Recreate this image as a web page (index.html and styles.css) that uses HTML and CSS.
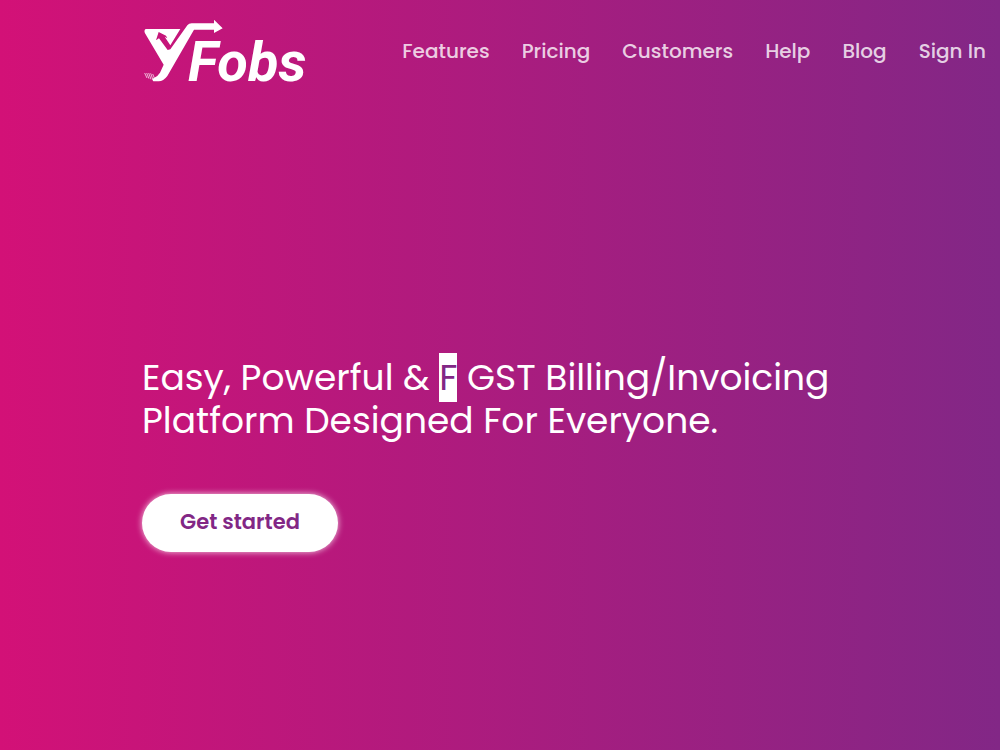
FILE: index.html
```html
<!DOCTYPE html>
<html lang="en">
<head>
<meta charset="utf-8">
<meta name="viewport" content="width=device-width, initial-scale=1">
<title>YFobs</title>
<link rel="stylesheet" href="styles.css">
</head>
<body>
<header class="header">
  <a class="logo" href="#" aria-label="YFobs home">
    <svg class="logo-image" viewBox="0 0 172 84" aria-hidden="true">
      <g transform="translate(-4 -4) scale(.33333)">
        <path class="logo-mark" d="M23 45H127L97 94L80 68L88 73L84 65L62 54L54 79L63 73L89 108L97 106L148 34Q153 28 161 28H228V17L254 43L228 57V47H168L88 186Q76 202 62 202H46Q40 195 49 191Q59 187 66 176L77 152L21 58Q17 49 23 45Z"/>
        <path class="logo-lines" d="M20 177L27 192M26 177L33 194M32 177L39 196M38 178L45 198M44 180L49 192"/>
      </g>
      <text class="logo-text" x="46" y="63">Fobs</text>
    </svg>
  </a>
  <nav class="nav" aria-label="Main">
    <a href="#">Features</a>
    <a href="#">Pricing</a>
    <a href="#">Customers</a>
    <a href="#">Help</a>
    <a href="#">Blog</a>
    <a href="#">Sign In</a>
  </nav>
</header>
<main class="hero">
  <h1 class="headline">Easy, Powerful &amp; <span class="typed">F</span> GST Billing/Invoicing Platform Designed For Everyone.</h1>
  <button class="cta" type="button">Get started</button>
</main>
</body>
</html>
```

FILE: styles.css
```css
* { box-sizing: border-box; }

body {
  margin: 0;
  min-height: 100vh;
  color: #fff;
  font-family: Poppins, Inter, sans-serif;
  background: linear-gradient(90deg, #d31177, #822786);
}

.header {
  display: flex;
  align-items: flex-start;
  justify-content: space-between;
  padding: 18px 14px 0 142px;
}

.logo { flex: none; }

.logo-image {
  display: block;
  width: 172px;
  height: 84px;
}

.logo-mark { fill: #fff; }

.logo-lines {
  fill: none;
  stroke: #fff;
  stroke-width: 3;
  opacity: .7;
}

.logo-text {
  fill: #fff;
  font: italic 700 56px Roboto, sans-serif;
}

.nav {
  display: flex;
  gap: 32px;
  padding-top: 18px;
  font-size: 20px;
  font-weight: 500;
  line-height: 30px;
}

.nav a {
  color: rgba(255, 255, 255, .8);
  text-decoration: none;
  white-space: nowrap;
}

.hero { padding: 254px 142px 40px; }

.headline {
  max-width: 712px;
  margin: 0;
  font-size: 36px;
  font-weight: 400;
  line-height: 43px;
}

.typed {
  color: #822785;
  background: linear-gradient(#fff, #fff) center / 100% 49px no-repeat;
}

.cta {
  min-width: 196px;
  height: 58px;
  margin-top: 52px;
  padding: 0 36px 4px;
  border: 0;
  border-radius: 29px;
  color: #822785;
  background: #fff;
  box-shadow: 0 0 6px rgba(255, 255, 255, .8);
  font: 600 21px Poppins, Inter, sans-serif;
}
```
